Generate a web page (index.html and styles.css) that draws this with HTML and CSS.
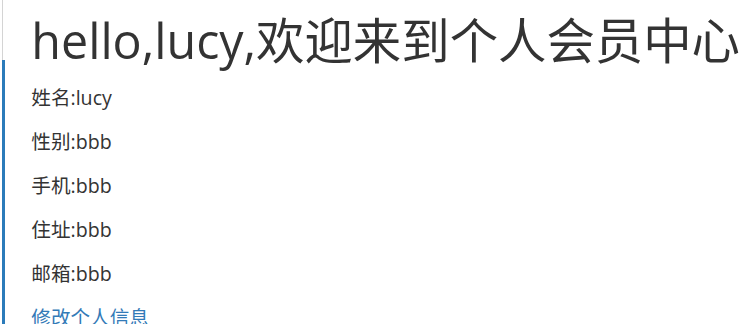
FILE: index.html
```html
<!DOCTYPE html>
<html lang="zh-CN">

<head>
    <meta charset="UTF-8">
    <meta name="viewport" content="width=device-width, initial-scale=1.0">
    <title>个人会员中心</title>
    <link rel="stylesheet" href="styles.css">
</head>

<body>
    <div class="page">
        <div class="rail">
            <div class="rail-top"></div>
            <div class="rail-bar"></div>
        </div>
        <div class="content">
            <h1>hello,lucy,欢迎来到个人会员中心</h1>
            <p>姓名:lucy</p>
            <p>性别:bbb</p>
            <p>手机:bbb</p>
            <p>住址:bbb</p>
            <p>邮箱:bbb</p>
            <p><a href="#">修改个人信息</a></p>
        </div>
    </div>
</body>

</html>
```

FILE: styles.css
```css
* {
    box-sizing: border-box;
}

body {
    margin: 0;
    font-family: "Open Sans", "Noto Sans CJK SC", sans-serif;
    color: #333;
    background-color: #fff;
}

.page {
    display: flex;
    min-height: 324px;
}

.rail {
    display: flex;
    flex-direction: column;
    width: 6px;
    margin-left: 2px;
}

.rail-top {
    height: 60px;
    border-left: 1px solid #d4d4d4;
}

.rail-bar {
    flex: 1;
    background-color: #2b7bba;
}

.content {
    padding: 10px 0 0 26px;
}

h1 {
    margin: 0;
    font-size: 48.4px;
    font-weight: normal;
    line-height: 60px;
    white-space: nowrap;
}

p {
    margin: 18px 0 0;
    font-size: 19.6px;
    line-height: 26px;
}

h1 + p {
    margin-top: 15px;
}

a {
    color: #337ab7;
    text-decoration: none;
}
```
